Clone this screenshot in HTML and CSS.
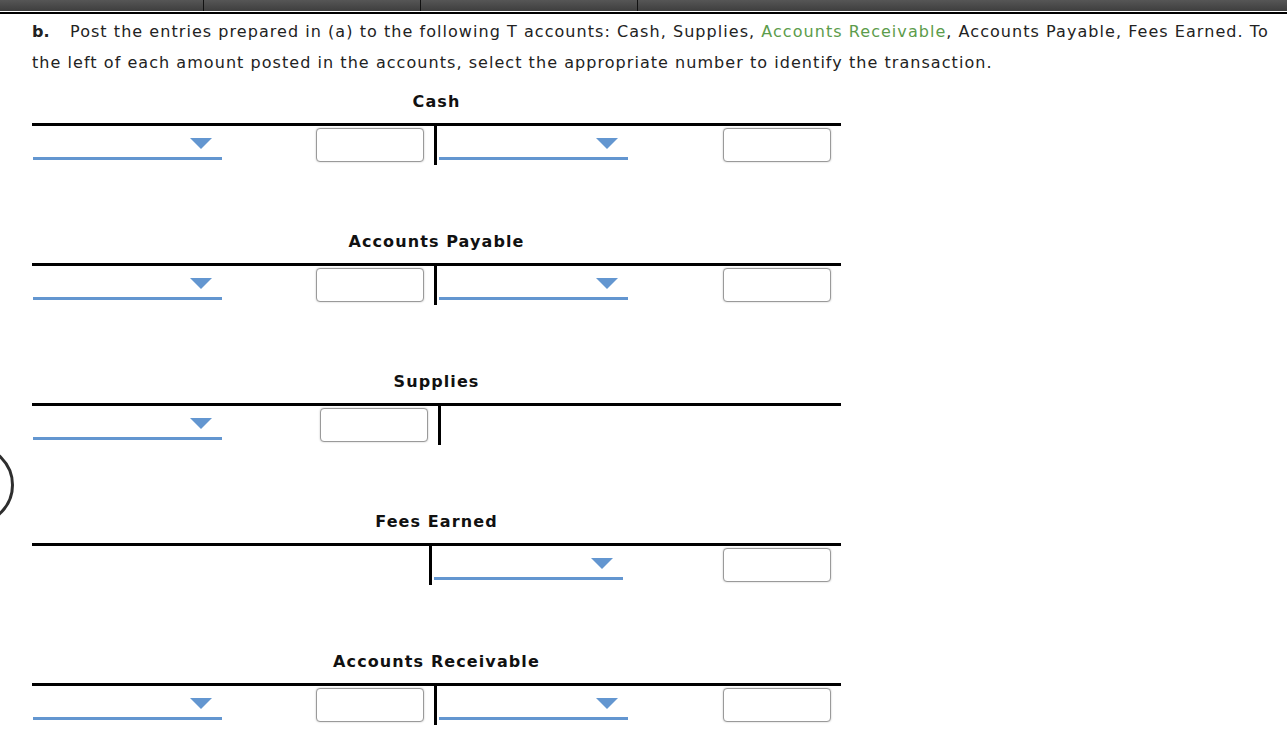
FILE: index.html
```html
<!DOCTYPE html>
<html lang="en">
<head>
<meta charset="utf-8">
<title>T Accounts</title>
<link rel="stylesheet" href="styles.css">
</head>
<body>
  <div class="tabbar">
    <div class="tab tab-first"></div>
    <div class="tab"></div>
    <div class="tab"></div>
    <div class="tab tab-rest"></div>
  </div>

  <main class="content">
    <p class="prompt"><b class="prompt-label">b.</b>Post the entries prepared in (a) to the following T accounts: Cash, Supplies, <span class="term">Accounts Receivable</span>, Accounts Payable, Fees Earned. To the left of each amount posted in the accounts, select the appropriate number to identify the transaction.</p>

    <section class="taccount">
      <h3 class="taccount-title">Cash</h3>
      <div class="taccount-body">
        <div class="side side-debit">
          <div class="select" role="combobox"><svg class="caret" viewBox="0 0 22 11"><polygon points="0,0 22,0 11,11"/></svg></div>
          <input class="amount" type="text">
        </div>
        <div class="side side-credit">
          <div class="select" role="combobox"><svg class="caret" viewBox="0 0 22 11"><polygon points="0,0 22,0 11,11"/></svg></div>
          <input class="amount" type="text">
        </div>
      </div>
    </section>

    <section class="taccount">
      <h3 class="taccount-title">Accounts Payable</h3>
      <div class="taccount-body">
        <div class="side side-debit">
          <div class="select" role="combobox"><svg class="caret" viewBox="0 0 22 11"><polygon points="0,0 22,0 11,11"/></svg></div>
          <input class="amount" type="text">
        </div>
        <div class="side side-credit">
          <div class="select" role="combobox"><svg class="caret" viewBox="0 0 22 11"><polygon points="0,0 22,0 11,11"/></svg></div>
          <input class="amount" type="text">
        </div>
      </div>
    </section>

    <section class="taccount">
      <h3 class="taccount-title">Supplies</h3>
      <div class="taccount-body body-debit-only">
        <div class="side side-debit">
          <div class="select" role="combobox"><svg class="caret" viewBox="0 0 22 11"><polygon points="0,0 22,0 11,11"/></svg></div>
          <input class="amount" type="text">
        </div>
        <div class="side side-credit"></div>
      </div>
    </section>

    <section class="taccount">
      <h3 class="taccount-title">Fees Earned</h3>
      <div class="taccount-body body-credit-only">
        <div class="side side-debit"></div>
        <div class="side side-credit">
          <div class="select" role="combobox"><svg class="caret" viewBox="0 0 22 11"><polygon points="0,0 22,0 11,11"/></svg></div>
          <input class="amount" type="text">
        </div>
      </div>
    </section>

    <section class="taccount">
      <h3 class="taccount-title">Accounts Receivable</h3>
      <div class="taccount-body">
        <div class="side side-debit">
          <div class="select" role="combobox"><svg class="caret" viewBox="0 0 22 11"><polygon points="0,0 22,0 11,11"/></svg></div>
          <input class="amount" type="text">
        </div>
        <div class="side side-credit">
          <div class="select" role="combobox"><svg class="caret" viewBox="0 0 22 11"><polygon points="0,0 22,0 11,11"/></svg></div>
          <input class="amount" type="text">
        </div>
      </div>
    </section>
  </main>

  <!-- page-nav button, mostly outside the viewport edge -->
  <div class="nav-circle"></div>
</body>
</html>
```

FILE: styles.css
```css
html, body {
  margin: 0;
  padding: 0;
  background: #fff;
}

body {
  font-family: "DejaVu Sans", Verdana, sans-serif;
  color: #222;
  position: relative;
  min-height: 736px;
  overflow: hidden;
}

/* dark tab strip across the top */
.tabbar {
  display: flex;
  height: 11px;
  border-bottom: 1px solid #fff;
  box-shadow: 0 1px 0 #000, 0 2px 0 #000;
  background: linear-gradient(#565656, #3e3e3e);
}

.tab {
  width: 216px;
  border-right: 1px solid #111;
}

.tab-first {
  width: 203px;
}

.tab-rest {
  flex: 1;
  border-right: 0;
}

.content {
  padding: 4px 0 0 32px;
}

.prompt {
  margin: 0;
  width: 1252px;
  font-size: 16px;
  line-height: 31px;
  letter-spacing: 1.05px;
}

.prompt-label {
  display: inline-block;
  width: 38px;
  letter-spacing: 0;
}

.term {
  color: #5c9c4b;
}

/* T accounts */
.taccount {
  width: 809px;
  margin-top: 14px;
}

.taccount + .taccount {
  margin-top: 67px;
}

.taccount-title {
  margin: 0 0 11px;
  text-align: center;
  font-size: 16px;
  line-height: 20px;
  font-weight: bold;
  letter-spacing: 1.1px;
  color: #111;
}

.taccount-body {
  display: grid;
  grid-template-columns: 402px 407px;
  border-top: 3px solid #000;
  height: 39px;
}

.body-debit-only {
  grid-template-columns: 406px 403px;
}

.body-credit-only {
  grid-template-columns: 397px 412px;
}

.side {
  display: flex;
  align-items: flex-start;
  justify-content: space-between;
}

.side-debit {
  padding: 0 10px 0 1px;
}

.side-credit {
  border-left: 3px solid #000;
  padding: 0 10px 0 2px;
}

.select {
  position: relative;
  width: 189px;
  height: 31px;
  border-bottom: 3px solid #6396d0;
}

.caret {
  position: absolute;
  right: 10px;
  top: 12px;
  width: 22px;
  height: 11px;
  fill: #6396d0;
}

.amount {
  box-sizing: border-box;
  width: 108px;
  height: 34px;
  margin: 2px 0 0;
  padding: 0 6px;
  border: 1px solid #9a9a9a;
  border-radius: 4px;
  box-shadow: 0 0 2px rgba(0, 0, 0, 0.25);
  background: #fff;
  font: 14px "DejaVu Sans", sans-serif;
}

.nav-circle {
  position: absolute;
  left: -66px;
  top: 445px;
  width: 74px;
  height: 74px;
  border: 3px solid #2e2e2e;
  border-radius: 50%;
}
```
